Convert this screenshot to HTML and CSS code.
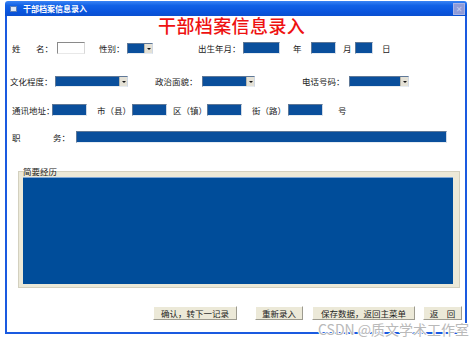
FILE: index.html
```html
<!DOCTYPE html>
<html>
<head>
    <title>干部档案信息录入</title>
    <meta charset="utf-8">
    <link rel="stylesheet" href="styles.css">
</head>
<body>
    <div class="window">
        <div class="titlebar">
            <span class="appicon"></span>
            <span class="caption">干部档案信息录入</span>
            <span class="close">&#x2715;</span>
        </div>

        <div class="client">
            <div class="heading">干部档案信息录入</div>

            <div class="row r1">
                <span class="lb" style="margin-left:5px;width:8px">姓</span>
                <span class="lb" style="margin-left:16px;width:18px">名：</span>
                <span class="edit white" style="margin-left:3px;width:28px"></span>
                <span class="lb" style="margin-left:14px;width:26px">性别：</span>
                <span class="combo" style="margin-left:2px;width:26px"><i class="drop"></i></span>
                <span class="lb" style="margin-left:45px;width:42px">出生年月：</span>
                <span class="edit" style="margin-left:3px;width:37px"></span>
                <span class="lb" style="margin-left:13px;width:9px">年</span>
                <span class="edit" style="margin-left:9px;width:25px"></span>
                <span class="lb" style="margin-left:7px;width:9px">月</span>
                <span class="edit" style="margin-left:3px;width:18px"></span>
                <span class="lb" style="margin-left:9px;width:9px">日</span>
            </div>

            <div class="row r2">
                <span class="lb" style="margin-left:3px;width:44px">文化程度：</span>
                <span class="combo" style="margin-left:1px;width:73px"><i class="drop"></i></span>
                <span class="lb" style="margin-left:27px;width:44px">政治面貌：</span>
                <span class="combo" style="margin-left:3px;width:53px"><i class="drop"></i></span>
                <span class="lb" style="margin-left:47px;width:44px">电话号码：</span>
                <span class="combo" style="margin-left:3px;width:60px"><i class="drop"></i></span>
            </div>

            <div class="row r3">
                <span class="lb" style="margin-left:5px;width:40px">通讯地址：</span>
                <span class="edit" style="width:35px"></span>
                <span class="lb" style="margin-left:10px;width:33px">市（县）</span>
                <span class="edit" style="margin-left:2px;width:35px"></span>
                <span class="lb" style="margin-left:6px;width:32px">区（镇）</span>
                <span class="edit" style="margin-left:2px;width:35px"></span>
                <span class="lb" style="margin-left:10px;width:34px">街（路）</span>
                <span class="edit" style="margin-left:2px;width:35px"></span>
                <span class="lb" style="margin-left:15px;width:9px">号</span>
            </div>

            <div class="row r4">
                <span class="lb" style="margin-left:5px;width:9px">职</span>
                <span class="lb" style="margin-left:32px;width:20px">务：</span>
                <span class="edit" style="margin-left:3px;width:371px"></span>
            </div>

            <fieldset class="group">
                <legend>简要经历</legend>
                <div class="memo"></div>
            </fieldset>

            <div class="buttons">
                <button type="button" class="btn b1">确认，转下一记录</button>
                <button type="button" class="btn b2">重新录入</button>
                <button type="button" class="btn b3">保存数据，返回主菜单</button>
                <button type="button" class="btn b4">返　回</button>
            </div>
        </div>
    </div>

    <div class="watermark">CSDN @质文学术工作室</div>
</body>
</html>
```

FILE: styles.css
```css
body {
    margin: 0;
    padding: 1px 0 0 5px;
    background-color: #fff;
    font-family: "Noto Sans CJK SC", "DejaVu Sans", sans-serif;
    position: relative;
    width: 474px;
    height: 340px;
    box-sizing: border-box;
    overflow: hidden;
}

.window {
    width: 462px;
    box-sizing: border-box;
}

.titlebar {
    height: 15px;
    background: linear-gradient(to bottom, #3a84f4 0%, #1262e6 30%, #0a55de 70%, #0a4fd0 100%);
    display: flex;
    align-items: center;
    border-radius: 3px 3px 0 0;
}

.appicon {
    width: 5px;
    height: 4px;
    margin-left: 5px;
    background: #dfe8f5;
    border: 1px solid #5b7fb8;
}

.caption {
    margin-left: 6px;
    color: #fff;
    font-size: 8px;
    font-weight: bold;
    line-height: 10px;
}

.close {
    margin-left: auto;
    margin-right: 2px;
    width: 12px;
    height: 12px;
    background: #8f9bd8;
    border: 1px solid #aab3e4;
    box-sizing: border-box;
    color: #c3c8ec;
    font-size: 8px;
    line-height: 10px;
    text-align: center;
}

.client {
    height: 318px;
    border: 2px solid #1a5ae0;
    border-top: none;
    box-sizing: border-box;
    background: #fff;
}

.heading {
    height: 26px;
    padding-left: 151px;
    color: #ee1111;
    font-size: 18px;
    font-weight: 500;
    letter-spacing: 0.4px;
    line-height: 18px;
}

.row {
    display: flex;
    align-items: center;
    height: 12px;
}

.r2 { margin-top: 21px; }
.r3 { margin-top: 17px; }
.r4 { margin-top: 15px; }

.lb {
    flex: none;
    font-size: 8.5px;
    line-height: 12px;
    color: #222;
    white-space: nowrap;
}

.edit, .combo {
    flex: none;
    height: 12px;
    box-sizing: border-box;
    background: #0a4f9c;
    border: 1px solid;
    border-color: #5f7897 #cfd8e4 #e6ecf2 #5f7897;
}

.edit.white {
    background: #fff;
    border-color: #8a8a8a #d8d8d8 #e8e8e8 #8a8a8a;
}

.combo {
    position: relative;
    height: 11px;
}

.drop {
    position: absolute;
    right: 0;
    top: 0;
    width: 7px;
    height: 9px;
    background: #e4e1d6;
    border-left: 1px solid #b8b6aa;
}

.drop::after {
    content: "";
    position: absolute;
    left: 2px;
    top: 4px;
    border-left: 2px solid transparent;
    border-right: 2px solid transparent;
    border-top: 2px solid #111;
}

.group {
    margin: 23px 0 0 11px;
    width: 442px;
    padding: 1px 6px 3px 4px;
    box-sizing: border-box;
    border: 1px solid #d3d0bf;
    background: #ece9d8;
    min-width: 0;
}

.group legend {
    padding: 0;
    margin-left: 0;
    font-size: 8.5px;
    line-height: 10px;
    color: #222;
}

.memo {
    height: 107px;
    background: #004d9a;
    border-top: 1px solid #7fa7d6;
    box-sizing: border-box;
}

.buttons {
    display: flex;
    margin-top: 18px;
    height: 14px;
}

.btn {
    flex: none;
    height: 14px;
    padding: 0;
    margin: 0;
    background: #ece9d8;
    border: 1px solid;
    border-color: #fff #9d9b8f #9d9b8f #fff;
    font-family: "Noto Sans CJK SC", sans-serif;
    font-size: 8.5px;
    line-height: 12px;
    color: #222;
}

.b1 { margin-left: 146px; width: 84px; }
.b2 { margin-left: 18px; width: 48px; }
.b3 { margin-left: 9px; width: 103px; }
.b4 { margin-left: 8px; width: 39px; }

.watermark {
    position: absolute;
    left: 318px;
    top: 322px;
    font-size: 14px;
    line-height: 15px;
    color: #b9b9b9;
    white-space: nowrap;
    text-shadow: 1px 0 #fff, -1px 0 #fff, 0 1px #fff, 0 -1px #fff;
}
```
